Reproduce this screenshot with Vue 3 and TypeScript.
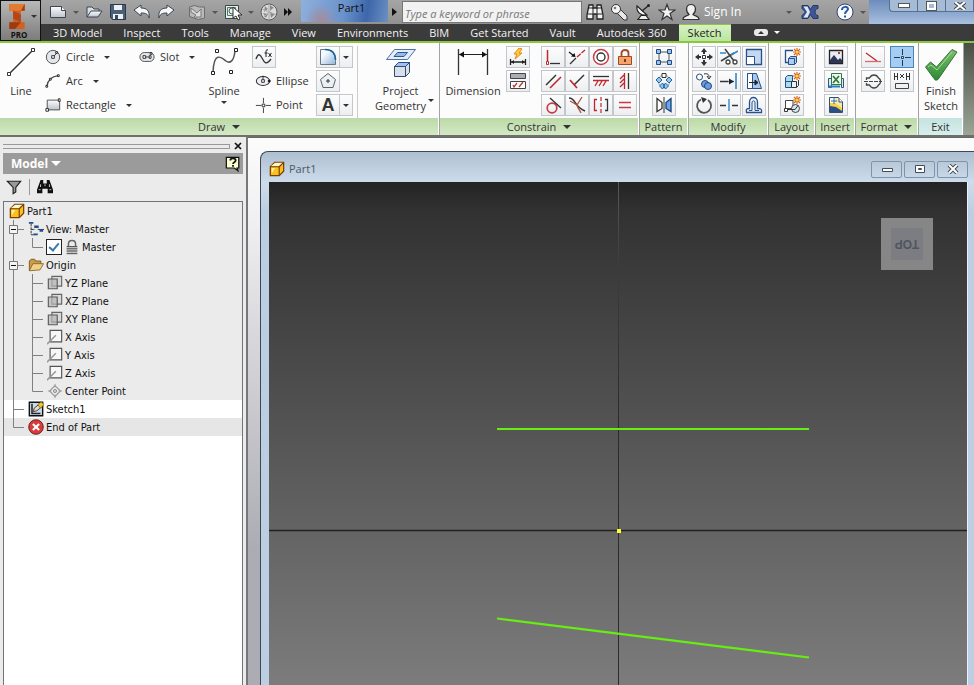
<script setup lang="ts">
import { ref } from 'vue'

interface TreeRow {
  label: string
  icon: string
  guides: string[]
  kind?: string
  checkable?: boolean
}

const tabs: string[] = [
  '3D Model', 'Inspect', 'Tools', 'Manage', 'View', 'Environments',
  'BIM', 'Get Started', 'Vault', 'Autodesk 360', 'Sketch',
]
const activeTab = ref('Sketch')
const query = ref('')
const masterOn = ref(true)

const constraints = [
  ['coincident', 'Coincident'], ['collinear', 'Collinear'], ['concentric', 'Concentric'], ['fix', 'Fix'],
  ['parallel', 'Parallel'], ['perpendicular', 'Perpendicular'], ['horizontal', 'Horizontal'], ['vertical', 'Vertical'],
  ['tangent', 'Tangent'], ['smooth', 'Smooth'], ['symmetric', 'Symmetric'], ['equal', 'Equal'],
]
const modify = [
  ['move', 'Move'], ['trim', 'Trim'], ['scale', 'Scale'],
  ['copy', 'Copy'], ['extend', 'Extend'], ['stretch', 'Stretch'],
  ['rotate', 'Rotate'], ['split', 'Split'], ['offset', 'Offset'],
]
const pattern = [['rect-pattern', 'Rectangular'], ['circ-pattern', 'Circular'], ['mirror', 'Mirror']]
const layout = [['make-part', 'Make Part'], ['make-comp', 'Make Components'], ['block', 'Create Block']]
const insert = [['image', 'Image'], ['excel', 'Points'], ['acad', 'ACAD']]

const rows: TreeRow[] = [
  { label: 'Part1', icon: 'cube', guides: [] },
  { label: 'View: Master', icon: 'view', guides: ['minus'] },
  { label: 'Master', icon: 'lock', guides: ['pipe', 'elbow'], checkable: true },
  { label: 'Origin', icon: 'folder', guides: ['minus'] },
  { label: 'YZ Plane', icon: 'plane', guides: ['pipe', 'tee'] },
  { label: 'XZ Plane', icon: 'plane', guides: ['pipe', 'tee'] },
  { label: 'XY Plane', icon: 'plane', guides: ['pipe', 'tee'] },
  { label: 'X Axis', icon: 'axis', guides: ['pipe', 'tee'] },
  { label: 'Y Axis', icon: 'axis', guides: ['pipe', 'tee'] },
  { label: 'Z Axis', icon: 'axis', guides: ['pipe', 'tee'] },
  { label: 'Center Point', icon: 'center', guides: ['pipe', 'elbow'] },
  { label: 'Sketch1', icon: 'sketch', guides: ['tee'], kind: 'active' },
  { label: 'End of Part', icon: 'end', guides: ['elbow'], kind: 'last' },
]
</script>

<template>
  <div class="app">
    <svg class="sprite" aria-hidden="true">
      <defs>
        <linearGradient id="g-blue" x1="0" y1="0" x2="1" y2="1"><stop offset="0.3" stop-color="#f4f9fd" /><stop offset="1" stop-color="#8fb4da" /></linearGradient>
        <linearGradient id="g-gray" x1="0" y1="0" x2="0" y2="1"><stop offset="0" stop-color="#fdfdfd" /><stop offset="1" stop-color="#bcc3cc" /></linearGradient>
        <linearGradient id="g-check" x1="0" y1="0" x2="0" y2="1"><stop offset="0" stop-color="#7cc06c" /><stop offset="1" stop-color="#2c8a35" /></linearGradient>
        <linearGradient id="g-axis" gradientUnits="userSpaceOnUse" x1="0" y1="0" x2="0" y2="240"><stop offset="0" stop-color="#585858" /><stop offset="0.35" stop-color="#3c3c3c" /><stop offset="1" stop-color="#2b2b2b" /></linearGradient>
      </defs>
      <symbol id="logo" viewBox="0 0 18 28">
        <path d="M1 1h16v7h-4v12h4v7H1v-7h4V8H1z" fill="#d4601f" />
        <path d="M1 1h16l-4 7H5L1 8z" fill="#e47a30" /><path d="M5 8l8 4v8l-8-4z" fill="#b3461a" /><path d="M1 20l4 0 8 0-6 7H1z" fill="#9c3a12" /><path d="M13 8h4V1z" fill="#a03f14" />
      </symbol>
      <symbol id="new" viewBox="0 0 18 18"><path d="M1.500 3.500h11l4 4v7h-15z" fill="url(#g-gray)" stroke="#3c4450" /><path d="M12.500 3.500v4h4" fill="#fff" stroke="#3c4450" /></symbol>
      <symbol id="open" viewBox="0 0 18 18"><path d="M2 14V4h5l2 2h5v2" fill="#d8dee6" stroke="#3c4450" /><path d="M2 14L6 8h11l-4 6z" fill="url(#g-gray)" stroke="#3c4450" /></symbol>
      <symbol id="save" viewBox="0 0 18 18"><path d="M1.500 1.500h15v15h-13l-2-2z" fill="#4b6078" stroke="#26384c" /><path d="M5 2h8v5H5zM4 11h10v5H4z" fill="#eef1f4" /><path d="M6 12h3v4H6z" fill="#3a4a5c" /></symbol>
      <symbol id="undo" viewBox="0 0 18 18"><path d="M1 7l7-5v3c6 0 9 3 8 10-1-4-3-5-8-5v3z" fill="#f4f6f8" stroke="#3c4450" stroke-linejoin="round" /></symbol>
      <symbol id="redo" viewBox="0 0 18 18"><path d="M17 7l-7-5v3C4 5 1 8 2 15c1-4 3-5 8-5v3z" fill="#f4f6f8" stroke="#3c4450" stroke-linejoin="round" /></symbol>
      <symbol id="update" viewBox="0 0 18 18"><path d="M1.500 4l5-1.500 5 1.500h5v11l-6 1.500-9-3z" fill="#b9b9b9" stroke="#6c6c6c" /><path d="M3 5l6 5 4-4v8H6l2-2-5-3z" fill="#dcdcdc" stroke="#777" /></symbol>
      <symbol id="select" viewBox="0 0 18 18"><path d="M1.500 2.500h13v13h-13z" fill="#e8f0ea" stroke="#39454d" /><path d="M3.500 4.500h8v8h-8z" fill="none" stroke="#4c8060" /><circle cx="8" cy="8" r="3" fill="none" stroke="#4d5a68" /><path d="M9 4v11l3-2 2 4 2-1-2-4h4z" fill="#fff" stroke="#333" /></symbol>
      <symbol id="sphere" viewBox="0 0 18 18"><circle cx="9" cy="9" r="8" fill="#dcdcdc" stroke="#5c5c5c" /><path d="M5 3l3 3-4 3zM10 2l4 3-4 2zM3 10l5 1-2 4zM10 9l5 2-4 4z" fill="#8a8a8a" /><path d="M2 6l14 6M4 14L14 4M9 1v16" stroke="#aaa" fill="none" /></symbol>
      <symbol id="binoc" viewBox="0 0 18 18"><path d="M3 2h4v3h4V2h4l2 10v4h-6v-5H7v5H1v-4z" fill="#f2f2f2" stroke="#222" stroke-width="1.300" /><path d="M2 11h5M11 11h5M7 5v5M11 5v5M3 5h4M11 5h4" stroke="#222" /></symbol>
      <symbol id="key" viewBox="0 0 18 18"><path d="M7 10l7 7h3v-4l-6-6" fill="#e8e8e8" stroke="#333" /><circle cx="6" cy="6" r="4.500" fill="#f6f6f6" stroke="#333" /><circle cx="5" cy="5" r="1.300" fill="#777" /></symbol>
      <symbol id="dish" viewBox="0 0 18 18"><path d="M3 3c-1 6 4 10 10 9z" fill="#f6f6f6" stroke="#222" stroke-width="1.200" /><path d="M8 8l6-5" stroke="#222" stroke-width="1.300" /><path d="M7 12.500l-3 4h11l-3-4z" fill="#f0f0f0" stroke="#222" stroke-width="1.200" /><circle cx="14.500" cy="2.500" r="1.500" fill="#222" /></symbol>
      <symbol id="star" viewBox="0 0 18 18"><path d="M9 1.500l2 5.500h6l-5 3.500 2 6-5-3.500-5 3.500 2-6L1 7h6z" fill="#f4f4f4" stroke="#333" stroke-width="1.200" /></symbol>
      <symbol id="user" viewBox="0 0 18 18"><path d="M1 16.500c0-4 4-3 6-5-4-4-3-10 2-10s6 6 2 10c2 2 6 1 6 5z" fill="#f0f0f0" stroke="#333" stroke-width="1.200" /></symbol>
      <symbol id="exchange" viewBox="0 0 18 18"><path d="M1 2.500h6l2.500 4L12 2.500h5v3c-2 0-3 2-3 3.500s1 3.500 3 3.500v3h-5l-2.500-4-2.500 4H1v-3l3.500-3.500L1 5.500z" fill="#3d5796" stroke="#24355f" /><path d="M2.500 3.500h4L9 9l-2.500 5.500h-4L6 9z" fill="#dfe6f4" /></symbol>
      <symbol id="help" viewBox="0 0 18 18"><circle cx="9" cy="9" r="8" fill="#f8faff" stroke="#30456f" /><path d="M6 7c0-4 6-4 6-1 0 2-3 2-3 5M9 12.500v2" fill="none" stroke="#2d55a8" stroke-width="2" /></symbol>

      <symbol id="line" viewBox="0 0 30 30"><path d="M3.500 26.500l23-23" stroke="#333" stroke-width="1.500" /><path d="M1.500 25.500h3v3h-3zM25.500 1.500h3v3h-3z" fill="#fff" stroke="#333" /></symbol>
      <symbol id="circle" viewBox="0 0 18 18"><circle cx="9" cy="9" r="7.500" fill="#e3e7ec" stroke="#444" /><path d="M9 9l4-4" stroke="#333" /><path d="M7.500 7.500h3v3h-3zM12 3h2v2h-2z" fill="#fff" stroke="#222" /></symbol>
      <symbol id="arc" viewBox="0 0 18 18"><path d="M2 15C3 8 7 4 15 3" fill="none" stroke="#444" stroke-width="1.400" /><path d="M1 14h2v2H1zM14 2h2v2h-2zM5 6h2v2H5z" fill="#fff" stroke="#222" /></symbol>
      <symbol id="rect" viewBox="0 0 18 18"><path d="M2.500 3.500h14v11h-14z" fill="url(#g-gray)" stroke="#444" /><path d="M1 13h3v3H1zM15 2h2v3h-2z" fill="#fff" stroke="#222" /></symbol>
      <symbol id="slot" viewBox="0 0 18 18"><rect x="1" y="4" width="16" height="10" rx="5" fill="#e3e7ec" stroke="#444" /><path d="M5.500 9h7" stroke="#333" /><path d="M4.500 7.500h3v3h-3zM11.500 7.500h2v3h-2zM12.500 4h2v2h-2z" fill="#fff" stroke="#222" /></symbol>
      <symbol id="spline" viewBox="0 0 30 30"><path d="M4 25c1-22 9-14 13-11s8 0 9-10" fill="none" stroke="#555" stroke-width="1.500" /><path d="M2.500 24.500h3v3h-3zM25.500 1.500h3v3h-3zM6.500 2.500h3v3h-3zM20.500 23.500h3v3h-3z" fill="#fff" stroke="#222" /></symbol>
      <symbol id="fx" viewBox="0 0 18 18"><path d="M1 11c2-6 4-5 6-1s4 8 9 1" fill="none" stroke="#333" stroke-width="1.300" /><path d="M13 2c-2-1-2 1-2 2v5M9.500 5h3M13.500 5l3 4M16.500 5l-3 4" fill="none" stroke="#222" /></symbol>
      <symbol id="ellipse" viewBox="0 0 18 18"><ellipse cx="9" cy="9" rx="7.500" ry="5" fill="#eceff3" stroke="#333" stroke-width="1.200" /><path d="M7.500 7.500h3v3h-3z" fill="#fff" stroke="#222" /><path d="M9 3v4M15 8h2v2h-2z" stroke="#222" /></symbol>
      <symbol id="point" viewBox="0 0 18 18"><path d="M9.500 1v6M9.500 12v6M1 9.500h6M12 9.500h6" stroke="#333" /><path d="M8 8h3v3H8z" fill="#fff" stroke="#222" /></symbol>
      <symbol id="fillet" viewBox="0 0 18 18"><path d="M1.500 1.500h5c6 0 10 4 10 11v4h-15z" fill="url(#g-blue)" stroke="#6b7580" /><path d="M6 1.500c7 0 10.500 4 10.500 10.500" fill="none" stroke="#16629c" stroke-width="1.500" /></symbol>
      <symbol id="polygon" viewBox="0 0 18 18"><path d="M9 1.500L16.500 7.500 14 15.500H4L1.500 7.500z" fill="#eaf0f3" stroke="#5b656e" /><path d="M8 8h2v2H8z" stroke="#333" fill="#fff" /></symbol>
      <symbol id="project" viewBox="0 0 32 32"><path d="M9.500 2.500h21l-8 10h-21z" fill="#e4eefa" stroke="#4e6f9f" /><path d="M12.500 5.500h10l-3.500 4h-10z" fill="#9bb9e0" stroke="#2d5597" /><path d="M9.500 19.500l4-4h11v10l-4 4h-11z" fill="#d5dfee" stroke="#3a4a60" /><path d="M9.500 19.500l4-4h11l-4 4z" fill="#9fc0ea" stroke="#1f4f94" /><path d="M9.500 19.500h11v10" fill="none" stroke="#3a4a60" /></symbol>
      <symbol id="dimension" viewBox="0 0 32 30"><path d="M1.500 2v26M30.500 2v26" stroke="#333" stroke-width="1.300" /><path d="M2 7.500h28" stroke="#222" /><path d="M2 7.500l5-3v6zM30 7.500l-5-3v6z" fill="#111" /></symbol>
      <symbol id="autodim" viewBox="0 0 18 18"><path d="M1.500 11v6M16.500 11v6M2 14h14" stroke="#222" stroke-width="1.300" /><path d="M2 14l3-2v4zM16 14l-3-2v4z" fill="#222" /><path d="M10 0L5 6h3l-2 5 7-6h-3l3-4z" fill="#ffcf33" stroke="#e3861d" /></symbol>
      <symbol id="showcon" viewBox="0 0 18 18"><path d="M1.500 1.500h15v5h-15z" fill="#a8adb8" stroke="#444" /><path d="M1.500 9.500h15v7h-15z" fill="#fff" stroke="#444" /><path d="M4 13l1 2 3-4M10 15l4-5" stroke="#bb3a30" fill="none" stroke-width="1.300" /></symbol>

      <symbol id="coincident" viewBox="0 0 18 18"><path d="M3.500 2v11" stroke="#c0262d" stroke-width="1.500" /><path d="M6 15.500h10" stroke="#333" stroke-width="1.300" /><path d="M2.500 13.500h2v3h-2z" fill="#fff" stroke="#c0262d" /></symbol>
      <symbol id="collinear" viewBox="0 0 18 18"><path d="M2 16l6-6" stroke="#333" stroke-width="1.300" /><path d="M9 9l8-7" stroke="#c0262d" stroke-width="1.300" stroke-dasharray="5 1" /><path d="M1 4l5 4" stroke="#111" stroke-width="1.300" fill="none" /><path d="M7.500 9l-4.500-.5 3.500-3.500z" fill="#111" /></symbol>
      <symbol id="concentric" viewBox="0 0 18 18"><circle cx="9" cy="9" r="7.500" fill="#fff" stroke="#c93a48" stroke-width="1.500" /><circle cx="9" cy="9" r="4" fill="#fff" stroke="#333" stroke-width="1.400" /></symbol>
      <symbol id="fix" viewBox="0 0 18 18"><path d="M5.500 9V5c0-4 7-4 7 0v4" fill="none" stroke="#a04a28" stroke-width="1.800" /><path d="M2.500 8.500h13v8h-13z" fill="#f5a46b" stroke="#a5461f" /><path d="M9 11v3" stroke="#8b3512" stroke-width="2" /></symbol>
      <symbol id="parallel" viewBox="0 0 18 18"><path d="M2 13L12 3" stroke="#333" stroke-width="1.400" /><path d="M6 16L17 5" stroke="#c0262d" stroke-width="1.600" /></symbol>
      <symbol id="perpendicular" viewBox="0 0 18 18"><path d="M6 13L16 3" stroke="#333" stroke-width="1.400" /><path d="M2 8l7 8" stroke="#c0262d" stroke-width="1.600" /></symbol>
      <symbol id="horizontal" viewBox="0 0 18 18"><path d="M1 4.500h16" stroke="#333" stroke-width="1.300" /><path d="M1 8.500h16M3 14l3-5M7 14l3-5M11 14l3-5" stroke="#c0262d" stroke-width="1.300" /></symbol>
      <symbol id="vertical" viewBox="0 0 18 18"><path d="M12.500 1v16" stroke="#333" stroke-width="1.300" /><path d="M8.500 1v16M4 7l4-4M4 11l4-4M4 15l4-4" stroke="#c0262d" stroke-width="1.300" /></symbol>
      <symbol id="tangent" viewBox="0 0 18 18"><circle cx="8" cy="12" r="4.800" fill="none" stroke="#c93a48" stroke-width="1.700" /><path d="M6 2l11 10" stroke="#333" stroke-width="1.400" /></symbol>
      <symbol id="smooth" viewBox="0 0 18 18"><path d="M1 2c7 0 5 9 16 13" stroke="#333" fill="none" stroke-width="1.500" /><path d="M9 9L14 1M2 5l7 4M9 9c1 4 3 5 4 8" stroke="#b5523c" fill="none" stroke-width="1.300" /></symbol>
      <symbol id="symmetric" viewBox="0 0 18 18"><path d="M5 3.500H2.500v11H5" fill="none" stroke="#c0262d" stroke-width="1.300" /><path d="M13 3.500h2.500v11H13" fill="none" stroke="#333" stroke-width="1.300" /><path d="M9 1v16" stroke="#c0262d" stroke-width="1.200" stroke-dasharray="4 2" /></symbol>
      <symbol id="equal" viewBox="0 0 18 18"><path d="M3 6.500h12M3 11.500h12" stroke="#c93a48" stroke-width="1.500" /></symbol>

      <symbol id="rect-pattern" viewBox="0 0 18 18"><path d="M4 4h10v10H4z" fill="none" stroke="#555" /><path d="M1.500 1.500h4v4h-4zM12.500 1.500h4v4h-4zM1.500 12.500h4v4h-4zM12.500 12.500h4v4h-4z" fill="#9cc2ec" stroke="#1f4c86" /></symbol>
      <symbol id="circ-pattern" viewBox="0 0 18 18"><circle cx="9" cy="9" r="6" fill="none" stroke="#9aa7b3" /><path d="M7 1.500h4v4H7z" fill="#fff" stroke="#333" /><path d="M1 8l3-3 3 3-3 3zM17 8l-3-3-3 3 3 3zM4.500 14l3-3 2 3-2 3zM13.500 14l-3-3-2 3 2 3z" fill="#8cc6f2" stroke="#256297" /></symbol>
      <symbol id="mirror" viewBox="0 0 18 18"><path d="M2 2.500l5 4v6l-5 3z" fill="#fff" stroke="#333" stroke-width="1.300" /><path d="M16 2.500l-5 4v6l5 3z" fill="#6aa7e6" stroke="#153f7c" stroke-width="1.300" /><path d="M9 1v16" stroke="#333" /></symbol>

      <symbol id="move" viewBox="0 0 18 18"><path d="M9 0l3 4H6zM9 18l3-4H6zM0 9l4-3v6zM18 9l-4-3v6z" fill="#333" /><path d="M9 3v3M9 12v3M3 9h3M12 9h3" stroke="#333" stroke-width="2" /><path d="M7.500 7.500h3v3h-3z" fill="#fff" stroke="#333" /></symbol>
      <symbol id="trim" viewBox="0 0 18 18"><path d="M5 1l9 12M1 13L14 5" stroke="#444" stroke-width="1.600" /><path d="M0 5h6M11 7l7-4" stroke="#2d8ad0" stroke-width="1.700" /><circle cx="15" cy="14" r="2" fill="#fff" stroke="#444" stroke-width="1.300" /><circle cx="8" cy="14" r="2" fill="#fff" stroke="#444" stroke-width="1.300" /></symbol>
      <symbol id="scale" viewBox="0 0 18 18"><path d="M1.500 1.500h15v15h-15z" fill="#c3d7f1" stroke="#28508a" stroke-width="1.300" /><path d="M1.500 8.500h8v8h-8z" fill="#fff" stroke="#28508a" /></symbol>
      <symbol id="copy" viewBox="0 0 18 18"><circle cx="4.500" cy="5" r="3" fill="#fff" stroke="#26497b" /><circle cx="10" cy="12" r="3.500" fill="#6b9ce0" stroke="#26497b" /><circle cx="13" cy="14" r="3.500" fill="#6b9ce0" stroke="#26497b" /><path d="M9 2c4-1 5 1 5 3M12 4l2 3 2-3" fill="none" stroke="#222" /></symbol>
      <symbol id="extend" viewBox="0 0 18 18"><path d="M0 9.500h8" stroke="#333" stroke-width="1.500" /><path d="M8 9.500h6" stroke="#2b7dc4" stroke-width="1.300" /><path d="M9 6.500l5 3-5 3z" fill="#222" /><path d="M16 1v16" stroke="#2b7dc4" stroke-width="1.500" /></symbol>
      <symbol id="stretch" viewBox="0 0 18 18"><path d="M2.500 1.500h9l5 15h-14z" fill="#a9c6ee" stroke="#28508a" /><path d="M2.500 1.500h5v15h-5z" fill="#fff" stroke="#28508a" /><path d="M4 10.500h8M10 8l3 2.500-3 2.500z" stroke="#222" fill="#222" /></symbol>
      <symbol id="rotate" viewBox="0 0 18 18"><path d="M6 3.500a7 7 0 1 0 7 .5" fill="none" stroke="#555" stroke-width="1.800" /><path d="M6 1l6 2-4 4z" fill="#333" /></symbol>
      <symbol id="split" viewBox="0 0 18 18"><path d="M0 9.500h6M12 9.500h6" stroke="#333" stroke-width="1.300" /><path d="M9 3v12" stroke="#2b7dc4" stroke-width="1.300" /></symbol>
      <symbol id="offset" viewBox="0 0 18 18"><path d="M1.500 16.500h15c1-4-2-4-4-4V6c0-6-8-6-8 0v6.500c-2 0-4 0-3 4z" fill="#eaf3fc" stroke="#28508a" stroke-width="1.300" /><path d="M4 14.500h3V7c0-3 3-3 3 0v7.500h4" fill="none" stroke="#28508a" /></symbol>

      <symbol id="spark" viewBox="0 0 8 8"><path d="M4 0v8M0 4h8M1 1l6 6M7 1L1 7" stroke="#d5641e" stroke-width="1.200" /><circle cx="4" cy="4" r="1.500" fill="#ffd84a" /></symbol>
      <symbol id="make-part" viewBox="0 0 18 18"><path d="M10 2.500H2.500v12H5" fill="none" stroke="#28508a" stroke-width="1.300" /><path d="M5.500 10.500l2-2h6v6l-2 2h-6z" fill="#a9d0f3" stroke="#28508a" /><path d="M5.500 10.500h6v6" fill="none" stroke="#28508a" /><use href="#spark" x="10" y="0" width="8" height="8" /></symbol>
      <symbol id="make-comp" viewBox="0 0 18 18"><path d="M2.500 5.500l2-2h5v6h-7zM2.500 9.500h6v6h-6z" fill="#a9dcf3" stroke="#28508a" /><path d="M8.500 9.500h5v6h-5z" fill="#e4f3fb" stroke="#333" /><path d="M13.500 15.500l2-2V8" fill="none" stroke="#333" /><use href="#spark" x="10" y="0" width="8" height="8" /></symbol>
      <symbol id="block" viewBox="0 0 18 18"><path d="M2.500 4.500H10v8H2.500z" fill="#fff" stroke="#444" /><path d="M1.500 12.500h3v3h-3z" fill="#fff" stroke="#333" /><circle cx="12.500" cy="12.500" r="4" fill="#d9e4f0" stroke="#444" /><path d="M4 13.500h8l3-4" fill="none" stroke="#333" /><use href="#spark" x="10" y="0" width="8" height="8" /></symbol>
      <symbol id="image" viewBox="0 0 18 18"><path d="M2.500 2.500h13v13h-13z" fill="#e9ebf2" stroke="#222" stroke-width="1.300" /><path d="M3 15v-3l4-5 4 5 2-2 2 2v3z" fill="#2f3558" /><path d="M11 4h2v2h-2z" fill="#c03830" /></symbol>
      <symbol id="excel" viewBox="0 0 18 18"><path d="M1.500 6.500h3v9h-3zM14.500 6.500h2v9h-2z" fill="#dbe9fa" stroke="#34577f" /><path d="M4.500 1.500h10v11h-10z" fill="#eef8ee" stroke="#2f7a3b" /><path d="M6 4l6 7M12 4l-6 7" stroke="#2f7a3b" stroke-width="1.700" /><path d="M2 14.500h11" stroke="#2b7dc4" stroke-width="2" /></symbol>
      <symbol id="acad" viewBox="0 0 18 18"><path d="M2.500 1.500h9l4 4v11h-13z" fill="#f8d23c" stroke="#34506f" /><path d="M3 2h5v5H3z" fill="#fff" /><path d="M8 2h4l3 4v6l-7-5z" fill="#f2e9b4" /><path d="M3 10l6 1 6 4v1H3z" fill="#2a4f86" /><path d="M12 2v4h4" stroke="#34506f" fill="#fff" /><path d="M4 5h6M7 2v6" stroke="#2c6cb0" /></symbol>
      <symbol id="constr" viewBox="0 0 18 18"><path d="M2 5l11 8" stroke="#c0262d" stroke-width="1.300" /><path d="M1 13.500h16" stroke="#d76a70" stroke-width="1.300" /></symbol>
      <symbol id="cpoint" viewBox="0 0 18 18"><path d="M9.500 1v6M9.500 12v6M1 9.500h6M12 9.500h6" stroke="#26384c" /><path d="M8.500 8.500h2v2h-2z" fill="#fff" stroke="#26384c" /></symbol>
      <symbol id="centerline" viewBox="0 0 18 18"><path d="M2.500 8V6h3c2-4 7-4 9 0 1 1 2 1 2 3M2.500 11v2h3c2 4 7 4 9 0 1-1 2-1 2-3" fill="none" stroke="#444" stroke-width="1.300" /><path d="M0 9.500h18" stroke="#444" stroke-dasharray="4 1" /></symbol>
      <symbol id="driven" viewBox="0 0 18 18"><path d="M1.500 1v7M4.500 1v7M13.500 1v7M16.500 1v7M2 4.500h3M13 4.500h3M7 2l4 4M11 2L7 6" stroke="#333" /><path d="M2.500 11.500h13v5h-13z" fill="#f2f2f2" stroke="#444" /></symbol>
      <symbol id="check" viewBox="0 0 34 34"><path d="M1.500 20l5-5 6 5L28 2.500l5 2.500L14 32.500c-2 1-3 1-4-1z" fill="url(#g-check)" stroke="#34703a" stroke-linejoin="round" /><path d="M4 20l3-2 6 5L28 5" fill="none" stroke="#a8dc98" /></symbol>

      <symbol id="cube" viewBox="0 0 18 18"><path d="M1.500 6.500l5-5h10v10l-5 5h-10z" fill="#f8c21a" stroke="#7a3d08" stroke-width="1.400" /><path d="M2 6l5-4h9l-5 4z" fill="#fff6cf" /><path d="M3 8h4l-4 6z" fill="#fff0a0" /><path d="M1.500 6.500h10v10M11.500 6.500l5-5" fill="none" stroke="#7a3d08" stroke-width="1.300" /></symbol>
      <symbol id="view" viewBox="0 0 18 18"><path d="M3.500 3v12.500H8M3.500 9.500H8M11 9.500h7" fill="none" stroke="#222" stroke-dasharray="3 1" /><path d="M1 1h5v2H1zM7 5h5v3H7zM13 9h4v3h-4zM6 14h5v2H6z" fill="#1f4f8a" /></symbol>
      <symbol id="lock" viewBox="0 0 18 18"><path d="M5 9V5.500c0-5 8-5 8 0V9" fill="none" stroke="#666" stroke-width="1.700" /><path d="M3 8h12v9H3z" fill="#c4c4c4" /><path d="M3 8.500h12M3 11h12M3 13.500h12M3 16.500h12" stroke="#444" /></symbol>
      <symbol id="folder" viewBox="0 0 18 18"><path d="M1.500 15.500v-11l2-2h4l1 2h6v3" fill="#c99c46" stroke="#75541f" /><path d="M1.500 15.500l4-8h12l-4 7z" fill="#f0cf86" stroke="#8c6829" /></symbol>
      <symbol id="plane" viewBox="0 0 18 18"><path d="M5.500 1.500h11v11h-11z" fill="#d9d9d9" stroke="#666" stroke-width="1.300" /><path d="M1.500 4.500h10v11h-10z" fill="#b5b5b5" fill-opacity=".7" stroke="#5c5c5c" stroke-width="1.300" /></symbol>
      <symbol id="axis" viewBox="0 0 18 18"><path d="M3.500 1.500h13v13h-13z" fill="#f7f7f7" stroke="#555" stroke-width="1.300" /><path d="M0 17L10 7" stroke="#999" stroke-width="1.700" /></symbol>
      <symbol id="center" viewBox="0 0 18 18"><path d="M9 3l6 6-6 6-6-6z" fill="#eee" stroke="#999" stroke-width="1.300" /><circle cx="9" cy="9" r="1.800" fill="#ccc" stroke="#888" /><path d="M9 1v4M9 13v4M1 9h4M13 9h4" stroke="#999" /></symbol>
      <symbol id="sketch" viewBox="0 0 18 18"><path d="M1.500 1.500h15v15h-15z" fill="#c9dbef" stroke="#111" stroke-width="1.600" /><path d="M4.500 3v11H14" fill="none" stroke="#222" stroke-width="1.700" /><path d="M6 12l1-4 5-4 3 3-5 4z" fill="#e8dcc0" stroke="#333" /><path d="M11 4l4-3 3 3-4 4z" fill="#f2c92c" stroke="#7a6524" /></symbol>
      <symbol id="end" viewBox="0 0 18 18"><circle cx="9" cy="9" r="8.200" fill="#da3a3a" stroke="#5c1a1a" /><path d="M5.500 5.500l7 7M12.500 5.500l-7 7" stroke="#fff" stroke-width="2.400" /></symbol>
      <symbol id="funnel" viewBox="0 0 18 18"><path d="M1.500 2.500h15l-5.500 7v5l-3 2v-7z" fill="#999" stroke="#222" stroke-width="1.300" /></symbol>
      <symbol id="find" viewBox="0 0 18 18"><path d="M4 1h3v4h4V1h3l4 11v4h-6v-5H6v5H0v-4z" fill="#111" /><path d="M2 12h2M14 12h2M4 6v3M14 6v3M9 6v2" stroke="#ddd" /></symbol>
      <symbol id="tip" viewBox="0 0 18 18"><path d="M1.500 1.500h14v12h-2l1 3-4-3h-9z" fill="#ffffcf" stroke="#111" stroke-width="1.400" /><path d="M6 5c0-3 6-3 6 0 0 2-3 2-3 4M9 10v2" fill="none" stroke="#111" stroke-width="2" /></symbol>

      <symbol id="minus" viewBox="0 0 19 18"><path d="M4.500 0v18M4 9.500h11" stroke="#808080" /><path d="M.5 5.500h8v8h-8z" fill="#f4f4f4" stroke="#777" /><path d="M2 9.500h5" stroke="#111" /></symbol>
      <symbol id="pipe" viewBox="0 0 19 18"><path d="M4.500 0v18" stroke="#808080" /></symbol>
      <symbol id="tee" viewBox="0 0 19 18"><path d="M4.500 0v18M4 9.500h11" stroke="#808080" /></symbol>
      <symbol id="elbow" viewBox="0 0 19 18"><path d="M4.500 0v9.500H15" stroke="#808080" fill="none" /></symbol>
    </svg>

    <header class="top">
      <button class="appmenu" aria-label="Application menu">
        <svg class="logo"><use href="#logo" /></svg>
        <i class="arrow"></i>
        <span class="pro">PRO</span>
      </button>
      <div class="bars">
        <div class="titlebar">
          <div class="quick">
            <button aria-label="New"><svg><use href="#new" /></svg></button><i class="arrow dim"></i>
            <button aria-label="Open"><svg><use href="#open" /></svg></button>
            <button aria-label="Save"><svg><use href="#save" /></svg></button>
            <button aria-label="Undo"><svg><use href="#undo" /></svg></button>
            <button aria-label="Redo"><svg><use href="#redo" /></svg></button>
            <button class="apart" aria-label="Update"><svg><use href="#update" /></svg></button><i class="arrow dim"></i>
            <button aria-label="Select"><svg><use href="#select" /></svg></button><i class="arrow dim"></i>
            <button aria-label="Appearance"><svg><use href="#sphere" /></svg></button>
            <i class="more"></i><i class="more second"></i>
          </div>
          <div class="glass doc">Part1</div>
          <div class="info">
            <i class="play"></i>
            <input v-model="query" class="search" type="text" placeholder="Type a keyword or phrase" aria-label="Search help" />
            <div class="services">
              <button aria-label="Search"><svg><use href="#binoc" /></svg></button>
              <button aria-label="Subscription"><svg><use href="#key" /></svg></button>
              <button aria-label="Communication"><svg><use href="#dish" /></svg></button>
              <button aria-label="Favorites"><svg><use href="#star" /></svg></button>
              <button class="sign"><svg><use href="#user" /></svg><span>Sign In</span><i class="arrow dim"></i></button>
              <button aria-label="Exchange"><svg><use href="#exchange" /></svg></button>
            </div>
            <button class="help" aria-label="Help"><svg><use href="#help" /></svg></button><i class="arrow dim"></i>
          </div>
          <div class="glass win">
            <div class="winbtns">
              <button aria-label="Minimize"><i class="w-min"></i></button>
              <button aria-label="Restore"><i class="w-max"></i></button>
              <button aria-label="Close"><svg viewBox="0 0 12 8"><path d="M1 0l10 8M11 0L1 8" stroke="#444" stroke-width="4" /><path d="M1 0l10 8M11 0L1 8" stroke="#fff" stroke-width="2" /></svg></button>
            </div>
          </div>
        </div>
        <nav class="tabs">
          <button v-for="t in tabs" :key="t" :class="['tab', { on: t === activeTab }]" @click="activeTab = t">{{ t }}</button>
          <button class="collapse" aria-label="Minimize ribbon"><span class="pill"><i></i></span><i class="arrow light"></i></button>
        </nav>
      </div>
    </header>

    <section class="ribbon">
      <div class="panel draw">
        <div class="tools">
          <button class="big line"><svg><use href="#line" /></svg>Line</button>
          <div class="stack shapes">
            <button class="item"><svg><use href="#circle" /></svg>Circle<i class="arrow"></i></button>
            <button class="item"><svg><use href="#arc" /></svg>Arc<i class="arrow"></i></button>
            <button class="item"><svg><use href="#rect" /></svg>Rectangle<i class="arrow"></i></button>
          </div>
          <div class="stack slots"><button class="item"><svg><use href="#slot" /></svg>Slot<i class="arrow"></i></button></div>
          <button class="big spline"><svg><use href="#spline" /></svg>Spline<i class="arrow"></i></button>
          <div class="stack curves">
            <button class="cell" aria-label="Equation curve"><svg><use href="#fx" /></svg></button>
            <button class="item"><svg><use href="#ellipse" /></svg>Ellipse</button>
            <button class="item"><svg><use href="#point" /></svg>Point</button>
          </div>
          <div class="stack">
            <div class="pair"><button class="cell" aria-label="Fillet"><svg><use href="#fillet" /></svg></button><button class="cell drop" aria-label="Fillet options"><i class="arrow"></i></button></div>
            <button class="cell" aria-label="Polygon"><svg><use href="#polygon" /></svg></button>
            <div class="pair"><button class="cell text">A</button><button class="cell drop" aria-label="Text options"><i class="arrow"></i></button></div>
          </div>
          <button class="big project"><svg><use href="#project" /></svg><span>Project<br />Geometry</span><i class="arrow"></i></button>
        </div>
        <h2>Draw <i class="arrow wide"></i></h2>
      </div>

      <div class="panel constrain">
        <div class="tools">
          <button class="big dimension"><svg><use href="#dimension" /></svg>Dimension</button>
          <div class="stack">
            <button class="cell" aria-label="Automatic dimensions"><svg><use href="#autodim" /></svg></button>
            <button class="cell" aria-label="Show constraints"><svg><use href="#showcon" /></svg></button>
          </div>
          <div class="grid joined">
            <button v-for="c in constraints" :key="c[0]" class="cell" :aria-label="c[1]"><svg><use :href="'#' + c[0]" /></svg></button>
          </div>
        </div>
        <h2>Constrain <i class="arrow wide"></i></h2>
      </div>

      <div class="panel pattern">
        <div class="tools"><div class="stack">
          <button v-for="c in pattern" :key="c[0]" class="cell" :aria-label="c[1]"><svg><use :href="'#' + c[0]" /></svg></button>
        </div></div>
        <h2>Pattern</h2>
      </div>

      <div class="panel modify">
        <div class="tools"><div class="grid three">
          <button v-for="c in modify" :key="c[0]" class="cell" :aria-label="c[1]"><svg><use :href="'#' + c[0]" /></svg></button>
        </div></div>
        <h2>Modify</h2>
      </div>

      <div class="panel layout">
        <div class="tools"><div class="stack">
          <button v-for="c in layout" :key="c[0]" class="cell" :aria-label="c[1]"><svg><use :href="'#' + c[0]" /></svg></button>
        </div></div>
        <h2>Layout</h2>
      </div>

      <div class="panel insert">
        <div class="tools"><div class="stack">
          <button v-for="c in insert" :key="c[0]" class="cell" :aria-label="c[1]"><svg><use :href="'#' + c[0]" /></svg></button>
        </div></div>
        <h2>Insert</h2>
      </div>

      <div class="panel format">
        <div class="tools"><div class="grid two">
          <button class="cell" aria-label="Construction"><svg><use href="#constr" /></svg></button>
          <button class="cell pressed" aria-label="Center point"><svg><use href="#cpoint" /></svg></button>
          <button class="cell" aria-label="Centerline"><svg><use href="#centerline" /></svg></button>
          <button class="cell" aria-label="Driven dimension"><svg><use href="#driven" /></svg></button>
        </div></div>
        <h2>Format <i class="arrow wide"></i></h2>
      </div>

      <div class="panel exit">
        <div class="tools"><button class="big finish"><svg><use href="#check" /></svg><span>Finish<br />Sketch</span></button></div>
        <h2>Exit</h2>
      </div>
    </section>

    <main class="work">
      <aside class="browser">
        <div class="grip"><i></i><button aria-label="Close panel"><svg viewBox="0 0 8 8"><path d="M1 1l6 6M7 1L1 7" stroke="#111" stroke-width="1.700" /></svg></button></div>
        <div class="head"><button>Model <i class="arrow white"></i></button><button aria-label="Help"><svg><use href="#tip" /></svg></button></div>
        <div class="filters">
          <button aria-label="Filter"><svg><use href="#funnel" /></svg></button><i></i>
          <button aria-label="Find"><svg><use href="#find" /></svg></button>
        </div>
        <ul class="tree">
          <li v-for="r in rows" :key="r.label" :class="r.kind">
            <svg v-for="(g, i) in r.guides" :key="i" class="guide"><use :href="'#' + g" /></svg>
            <label v-if="r.checkable" class="check">
              <input v-model="masterOn" type="checkbox" />
              <svg class="node"><use :href="'#' + r.icon" /></svg>
              <span>{{ r.label }}</span>
            </label>
            <template v-else>
              <svg class="node"><use :href="'#' + r.icon" /></svg>
              <span>{{ r.label }}</span>
            </template>
          </li>
        </ul>
      </aside>

      <div class="mdi">
        <section class="child">
          <header>
            <svg class="node"><use href="#cube" /></svg>
            <span>Part1</span>
            <div class="ctl">
              <button aria-label="Minimize"><svg viewBox="0 0 16 10"><path d="M3.500 4.500h10v3h-10z" fill="#fff" stroke="#444c58" /></svg></button>
              <button aria-label="Maximize"><svg viewBox="0 0 16 10"><path d="M3.500 1.500h9v7h-9z" fill="#fff" stroke="#444c58" /><path d="M6.500 4.500h3v1h-3z" fill="#fff" stroke="#444c58" /></svg></button>
              <button aria-label="Close"><svg viewBox="0 0 16 10"><path d="M4 1l8 8M12 1L4 9" stroke="#444c58" stroke-width="4" /><path d="M4 1l8 8M12 1L4 9" stroke="#fff" stroke-width="2" /></svg></button>
            </div>
          </header>
          <div class="canvas">
            <svg class="drawing" aria-label="Sketch geometry">
              <path d="M349 0h1v2000h-1z" fill="url(#g-axis)" />
              <path d="M0 348.500h2400" stroke="#202020" stroke-width="1.500" />
              <path d="M228 247h312M228 436.500l312 39" stroke="#66ee11" stroke-width="2" />
              <path d="M348 347h4v4h-4z" fill="#ffff30" />
            </svg>
            <button class="viewcube"><span>TOP</span></button>
          </div>
        </section>
      </div>
    </main>
  </div>
</template>

<style>
html, body { margin: 0; height: 100%; }
</style>

<style scoped>
.app { display: flex; flex-direction: column; height: 100vh; overflow: hidden; font: 11px/16px "Open Sans", "Noto Sans", sans-serif; color: #333; background: #f0f0f0; }
.sprite { position: absolute; width: 0; height: 0; }
button { appearance: none; border: 0; padding: 0; margin: 0; background: none; font: inherit; color: inherit; display: flex; align-items: center; justify-content: center; white-space: nowrap; }
button svg { width: 18px; height: 18px; flex: none; display: block; }
.arrow { flex: none; width: 0; height: 0; border: 3px solid transparent; border-top-color: #333; border-bottom-width: 0; }
.arrow.wide { display: inline-block; border-width: 4px 4px 0; margin: 0 0 2px 4px; }
.arrow.dim { border-top-color: #555; }
.arrow.light, .arrow.white { border-top-color: #fff; }
.arrow.white { border-width: 5px 5px 0; }

.top { display: flex; flex: none; background: #3b3b3b; border-bottom: 2px solid #8cc63f; height: 43px; box-sizing: border-box; }
.appmenu { display: grid; grid-template-columns: 24px 8px; grid-template-rows: 28px 10px; justify-content: start; align-items: center; width: 41px; height: 41px; box-sizing: border-box; flex: none; border: 1px solid #111; background: linear-gradient(#b8b8b8, #7c7c7c); padding: 1px 0 0 6px; }
.logo { width: 20px; height: 27px; }
.pro { font-size: 8px; line-height: 10px; font-weight: 700; color: #111; }
.bars { flex: 1; min-width: 0; }
.titlebar { display: flex; height: 24px; background: linear-gradient(#a5a5a5, #919191); overflow: hidden; }
.quick { display: flex; align-items: center; gap: 6px; padding-left: 8px; width: 252px; flex: none; }
.apart { margin-left: 7px; }
.more { border: 4px solid transparent; border-left-color: #111; border-right-width: 0; }
.more.second { margin-left: -6px; }
.glass { background: linear-gradient(100deg, #8fb0dd, #5f8ac4 45%, #3d67aa 70%, #7f9fca); }
.doc { width: 87px; height: 22px; flex: none; text-align: center; color: #111; padding-left: 14px; box-sizing: border-box; background: radial-gradient(circle at 20px 20px, #a58b9c, transparent 16px), linear-gradient(100deg, #8fb0dd, #6a92ca 50%, #3d67aa 75%, #6c90c2); }
.info { display: flex; align-items: center; flex: 1; min-width: 0; gap: 6px; }
.play { flex: none; border: 4px solid transparent; border-left: 5px solid #111; border-right: 0; margin-left: 4px; }
.search { flex: none; width: 180px; height: 22px; box-sizing: border-box; margin-left: -1px; border: 1px solid #777; padding: 2px 2px 0; background: #f2f2f2; font: italic 11px/16px "Open Sans", sans-serif; color: #333; }
.search::placeholder { color: #777; opacity: 1; }
.services { display: flex; flex: 1; gap: 6px; margin-left: -2px; }
.sign { flex: 1; justify-content: flex-start; gap: 4px; color: #fff; font-size: 12px; }
.sign .arrow { margin: 0 3px 0 auto; }
.help { margin-left: 11px; }
.info > .arrow { margin-right: 3px; }
.win { width: 105px; flex: none; display: flex; justify-content: flex-end; background: linear-gradient(#6c8cbb, #a9c0df); }
.winbtns { display: flex; height: 11px; border: 1px solid #56708f; border-top: 0; border-right: 0; border-radius: 0 0 0 4px; background: #a6bbd6; }
.winbtns button { width: 28px; border-right: 1px solid #56708f; box-sizing: border-box; }
.winbtns svg { width: 12px; height: 8px; }
.w-min { width: 10px; height: 3px; background: #fff; border: 1px solid #555; }
.w-max { width: 5px; height: 4px; border: 2px solid #fff; outline: 1px solid #555; }
.tabs { display: flex; height: 17px; gap: 1px; padding-left: 2px; background: #3b3b3b; color: #f2f2f2; }
.tab { font-size: 11px; padding: 0 10px; }
.tab.on { background: linear-gradient(#d8f0c4, #b9e69c); color: #222; padding: 0 9px; margin-left: 1px; border-top: 1px solid #8cc63f; }
.collapse { margin-left: 22px; gap: 6px; }
.pill { width: 14px; height: 7px; border-radius: 3px; background: #e8e8e8; display: flex; align-items: center; justify-content: center; }
.pill i { border: 3px solid transparent; border-top: 0; border-bottom-color: #333; }

.ribbon { display: flex; flex: none; height: 92px; background: linear-gradient(#4a4f46, #9ba697); border-bottom: 2px solid #6d7169; }
.panel { display: flex; flex-direction: column; flex: none; background: #fcfcfc; border-right: 1px solid #a3a3a3; box-sizing: border-box; }
.tools { display: flex; flex: 1; min-height: 0; padding-top: 3px; }
.panel h2 { flex: none; margin: 0; height: 17px; text-align: center; font: 11px/17px "Open Sans", sans-serif; background: linear-gradient(#bcd9a8, #d3e9c4); color: #333; border-right: 1px solid #fff; }
.stack { display: grid; grid-template-rows: repeat(3, 22px); gap: 2px; align-content: start; justify-items: start; }
.item { gap: 5px; font-size: 11px; }
.item svg { width: 16px; height: 16px; }
.item .arrow { margin-left: 5px; }
.cell { width: 24px; height: 22px; box-sizing: border-box; border: 1px solid #c3c6ca; background: linear-gradient(#fdfdfd, #eceef0); }
.cell.drop { width: 13px; border-left: 0; }
.cell.pressed { background: #a3cdf2; border-color: #4f83b5; }
.cell.text { font: 700 18px/20px "Liberation Sans", sans-serif; }
.pair { display: flex; }
.grid { display: grid; gap: 2px; align-content: start; }
.joined { grid-template-columns: repeat(4, 24px); column-gap: 0; margin-left: 11px; }
.three { grid-template-columns: repeat(3, 24px); column-gap: 1px; }
.two { grid-template-columns: repeat(2, 24px); column-gap: 5px; }
.big { flex-direction: column; justify-content: flex-start; line-height: 15px; padding-top: 1px; }
.big svg { width: 30px; height: 30px; margin-bottom: 6px; }
.draw { width: 440px; }
.line { width: 42px; }
.shapes { width: 94px; padding-left: 3px; }
.slots { width: 69px; }
.spline { width: 32px; }
.spline .arrow { margin-top: 3px; }
.curves { padding-left: 12px; width: 64px; }
.curves .item { margin-left: 3px; }
.project { position: relative; margin-left: 4px; padding-left: 17px; border-left: 1px solid #ccc; }
.project svg { width: 32px; height: 32px; margin-bottom: 4px; }
.project .arrow { position: absolute; right: -8px; bottom: 16px; }
.constrain { width: 200px; }
.dimension { width: 66px; }
.dimension svg { width: 32px; }
.pattern { width: 49px; }
.modify { width: 80px; }
.layout { width: 47px; }
.insert { width: 40px; }
.format { width: 63px; }
.exit { width: 45px; }
.pattern .tools, .modify .tools, .layout .tools, .insert .tools, .format .tools, .exit .tools { justify-content: center; }
.finish svg { width: 34px; height: 34px; margin-bottom: 2px; }
.exit h2 { background: linear-gradient(#c4e3e0, #d8efec); }

.work { display: flex; flex: 1; min-height: 0; }
.browser { display: flex; flex-direction: column; width: 248px; box-sizing: border-box; flex: none; padding: 4px 3px 0 3px; background: #ebebeb; border-right: 2px solid #77777a; }
.grip { display: flex; align-items: center; height: 10px; gap: 3px; }
.grip i { flex: 1; height: 3px; border: 1px solid #999; border-left: 0; }
.grip button { width: 10px; }
.grip svg { width: 8px; height: 8px; }
.head { display: flex; justify-content: space-between; align-items: center; height: 21px; margin: 2px 0 0; padding: 0 2px 0 8px; background: #9b9b9b; color: #fff; font: 700 12px/20px "Open Sans", sans-serif; }
.head button:first-child { gap: 3px; }
.head svg { width: 16px; height: 16px; }
.filters { display: flex; align-items: center; height: 26px; padding-left: 3px; gap: 7px; }
.filters svg { width: 16px; height: 16px; }
.filters i { width: 1px; height: 16px; background: #999; }
.tree { flex: 1; margin: 1px 0 0; padding: 0; list-style: none; border: 1px solid #70757c; border-bottom: 0; background: #fff; color: #111; font: 11px/16px "DejaVu Sans Condensed", "Open Sans", sans-serif; }
.tree li { display: flex; align-items: center; height: 18px; padding-left: 5px; background: #ebebeb; }
.tree li.active { background: #fff; }
.tree li.last { background: #e6e6e6; }
.tree span { padding-top: 2px; }
.guide { width: 19px; height: 18px; flex: none; }
.node { width: 16px; height: 16px; flex: none; margin-right: 2px; }
.check { display: flex; align-items: center; }
.check input { appearance: none; box-sizing: border-box; width: 16px; height: 16px; margin: 0 2px 0 -1px; border: 1px solid #222; background: #fff; display: grid; place-items: center; }
.check input:checked::after { content: ""; width: 4px; height: 8px; margin-bottom: 2px; border: solid #3e77ad; border-width: 0 2px 2px 0; transform: rotate(40deg); }

.mdi { display: flex; flex: 1; min-width: 0; padding: 13px 0 0 12px; background: linear-gradient(#fcfcfc, #f0f0f2 15%, #acacb4 75%); border-top: 1px solid #666; }
.child { display: flex; flex-direction: column; flex: 1; min-width: 0; padding: 0 6px 0 8px; background: linear-gradient(#aebfd1, #cddceb 30px, #bccfe2 60px); border: solid #3d4854; border-width: 1px 0 0 1px; border-radius: 8px 0 0 0; }
.child header { display: flex; align-items: center; height: 30px; box-sizing: border-box; padding-top: 4px; flex: none; gap: 2px; font-size: 11px; color: #4c5866; }
.ctl { display: flex; gap: 2px; margin-left: auto; }
.ctl button { width: 31px; height: 17px; box-sizing: border-box; border: 1px solid #7f93aa; border-radius: 2px; }
.ctl svg { width: 16px; height: 10px; }
.canvas { position: relative; flex: 1; min-height: 0; overflow: hidden; border-right: 1px solid #eef; background: linear-gradient(#232323, #323232 6%, #7c7c7c); }
.drawing { display: block; width: 100%; height: 100%; }
.viewcube { position: absolute; top: 36px; right: 34px; width: 52px; height: 52px; background: #868686; }
.viewcube span { width: 32px; height: 32px; background: #7b7d82; color: #51555f; font: 700 12px/32px "Liberation Sans", sans-serif; transform: rotate(180deg); }
</style>
